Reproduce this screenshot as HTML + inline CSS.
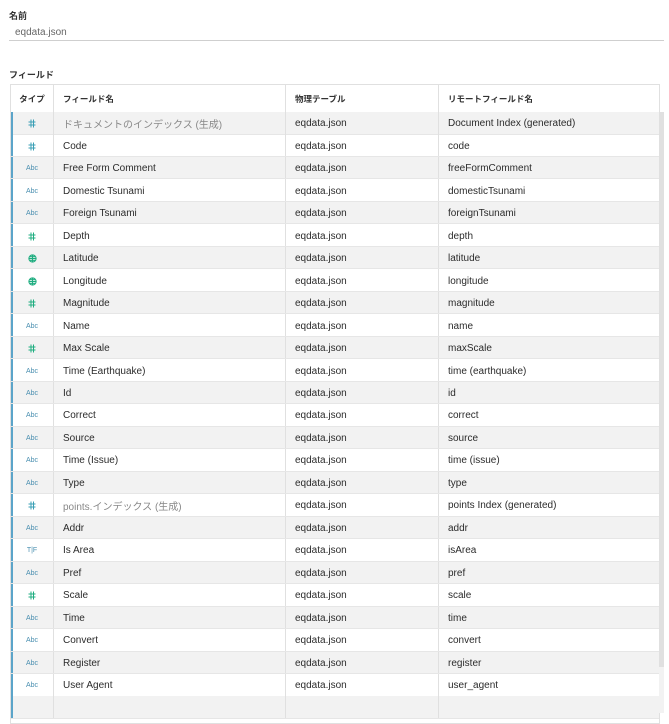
<!DOCTYPE html>
<html><head><meta charset="utf-8"><style>
*{margin:0;padding:0;box-sizing:border-box}
body{width:669px;height:713px;overflow:hidden;background:#fff;font-family:"Liberation Sans","Noto Sans CJK JP",sans-serif;color:#2b2b2b;position:relative}
.lbl{position:absolute;font-size:9px;font-weight:bold;color:#333}
.inp{position:absolute;left:15px;top:27px;font-size:10px;color:#666}
.line{position:absolute;left:9px;top:40px;width:655px;height:1px;background:#cfcfcf}
.tbl{position:absolute;left:10px;top:84px;width:650px;height:640px;border:1px solid #e0e0e0}
.hd{position:absolute;left:0;top:0;width:648px;height:28px;border-bottom:1px solid #ddd;background:#fff}
.c{position:absolute;top:0;height:100%;border-left:1px solid #e0e0e0;font-size:10px;display:flex;align-items:center;padding-left:9px;white-space:nowrap}
.row .c{padding-top:2px}
.hd .c{font-size:8.5px;font-weight:bold;color:#333}
.row{position:absolute;left:0;width:648px;height:22.5px;border-bottom:1px solid #e6e6e6}
.row.g{background:#f2f2f2}
.row::before{content:"";position:absolute;left:0;top:0;width:2px;height:100%;background:#5ba4c9}
.c0{left:0;width:42px;border-left:none;justify-content:center;padding:0;font-size:7px;color:#4a8fb0}
.c1{left:42px;width:232px}.c2{left:274px;width:153px}.c3{left:427px;width:221px}
.gen{color:#888}
.sb{position:absolute;left:659px;top:112px;width:5px;height:601px;background:#f2f2f2}
.sbt{position:absolute;left:659px;top:112px;width:5px;height:555px;background:#e0e0e0}
</style></head><body>
<div class="lbl" style="left:9px;top:9px">名前</div>
<div class="inp">eqdata.json</div>
<div class="line"></div>
<div class="lbl" style="left:9px;top:68px">フィールド</div>
<div class="tbl">
<div class="hd"><div class="c c0" style="font-size:8.5px;color:#333;font-weight:bold">タイプ</div><div class="c c1">フィールド名</div><div class="c c2">物理テーブル</div><div class="c c3">リモートフィールド名</div></div>
<div id="rows"></div>
</div>
<div class="sb"></div><div class="sbt"></div>
<script>
var G='<svg width="9" height="9" viewBox="0 0 10 10"><g fill="none" stroke="#1fad80" stroke-width="1.2"><circle cx="5" cy="5" r="4"/><path d="M1 5h8M5 1v8M2 3h6M2 7h6"/></g></svg>';
function H(c){return '<svg width="8" height="9" viewBox="0 0 8 9"><path d="M3 0.5v8M5.5 0.5v8M0.5 3h7M0.5 6h7" stroke="'+c+'" stroke-width="1" fill="none"/></svg>';}
var d=[
['n','ドキュメントのインデックス (生成)','Document Index (generated)',1],
['n','Code','code'],['a','Free Form Comment','freeFormComment'],['a','Domestic Tsunami','domesticTsunami'],
['a','Foreign Tsunami','foreignTsunami'],['g','Depth','depth'],['o','Latitude','latitude'],['o','Longitude','longitude'],
['g','Magnitude','magnitude'],['a','Name','name'],['g','Max Scale','maxScale'],['a','Time (Earthquake)','time (earthquake)'],
['a','Id','id'],['a','Correct','correct'],['a','Source','source'],['a','Time (Issue)','time (issue)'],['a','Type','type'],
['n','points.インデックス (生成)','points Index (generated)',1],['a','Addr','addr'],['t','Is Area','isArea'],['a','Pref','pref'],
['g','Scale','scale'],['a','Time','time'],['a','Convert','convert'],['a','Register','register'],['a','User Agent','user_agent'],['x','','']];
var h='';
d.forEach(function(r,i){
var ic=r[0]=='n'?H('#3a9fb5'):r[0]=='g'?H('#1fad80'):r[0]=='o'?G:r[0]=='a'?'Abc':r[0]=='t'?'T|F':'';
h+='<div class="row'+(i%2==0?' g':'')+'" style="top:'+(27+i*22.48)+'px"><div class="c c0">'+ic+'</div><div class="c c1'+(r[3]?' gen':'')+'">'+r[1]+'</div><div class="c c2">'+(r[0]=='x'?'':'eqdata.json')+'</div><div class="c c3">'+r[2]+'</div></div>';
});
document.getElementById('rows').innerHTML=h;
</script>
</body></html>
